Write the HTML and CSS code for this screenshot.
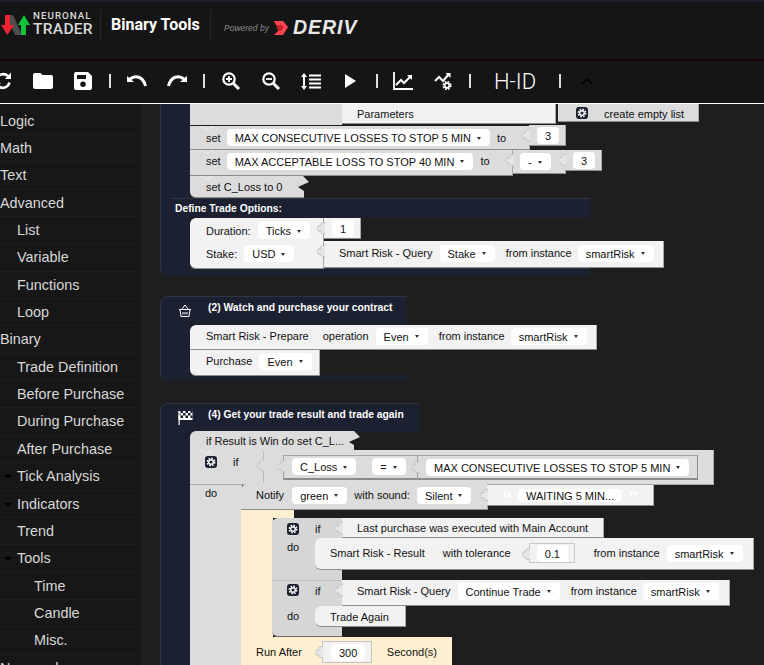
FILE: index.html
```html
<!DOCTYPE html>
<html lang="en">
<head>
  <meta charset="UTF-8">
  <meta name="viewport" content="width=device-width, initial-scale=1.0">
  <title>Binary Tools</title>
  <link rel="stylesheet" href="styles.css">
</head>
<body>
  <svg class="defs" width="0" height="0">
    <symbol id="gear" viewBox="0 0 12 12">
      <rect width="12" height="12" rx="3" fill="#1b2131"/>
      <circle cx="6" cy="6" r="3.7" fill="none" stroke="#fff" stroke-width="1.5" stroke-dasharray="1.6 1.3"/>
      <circle cx="6" cy="6" r="2.3" fill="none" stroke="#fff" stroke-width="1.4"/>
    </symbol>
    <symbol id="sock" viewBox="0 0 8 16">
      <path d="M8 1 V3 C4 2 3 4 4 6 C1 5 0 7 0 8.500 C0 10 1 12 4 11 C3 13 5 14 8 13.500 V16" fill="currentColor" stroke="#c4c4c4" stroke-width="1"/>
    </symbol>
  </svg>

  <header class="topbar">
    <div class="brand">
      <svg class="brand-mark" width="29" height="20" viewBox="0 0 29 20">
        <path d="M5 0 H12 L21 20 H14 Z" fill="#4d4d4d"/>
        <path d="M4 0 H9 V10 H13 L6.500 20 L0 10 H4 Z" fill="#ee2233"/>
        <path d="M20 20 V10 H17 L23 0 L29 10 H25 V20 Z" fill="#11c23c"/>
      </svg>
      <div class="brand-text">
        <span class="brand-small">NEURONAL</span>
        <span class="brand-big">TRADER</span>
      </div>
    </div>
    <div class="head-sep"></div>
    <div class="app-title">Binary Tools</div>
    <div class="head-sep"></div>
    <div class="powered">
      <span class="powered-by">Powered by</span>
      <svg width="16" height="14" viewBox="0 0 16 14"><path d="M1 0 H10 L15 6 L10 14 H1 L5 10 H8 L10 6 L8 4 H3 Z" fill="#ff444f"/><path d="M3 4 H8 L10 6 L8 10 H5 Z" fill="#c7222c"/></svg>
      <span class="deriv">DERIV</span>
    </div>
  </header>

  <nav class="toolbar">
    <span class="tool"><svg width="18" height="18" viewBox="0 0 18 18" fill="none" stroke="#fff" stroke-width="2.600"><path d="M2.500 7.500 A7 7 0 0 1 14 4"/><path d="M15.500 10.500 A7 7 0 0 1 4 14"/><path d="M17 0.500 V7 H11 Z" fill="#fff" stroke="none"/><path d="M1 17.500 V11 H7 Z" fill="#fff" stroke="none"/></svg></span>
    <span class="tool"><svg width="20" height="16" viewBox="0 0 20 16"><path d="M0 2 A2 2 0 0 1 2 0 H7.500 L9.500 2 H18 A2 2 0 0 1 20 4 V14 A2 2 0 0 1 18 16 H2 A2 2 0 0 1 0 14 Z" fill="#fff"/></svg></span>
    <span class="tool"><svg width="18" height="18" viewBox="0 0 18 18"><path fill-rule="evenodd" d="M2 0 H14 L18 4 V16 A2 2 0 0 1 16 18 H2 A2 2 0 0 1 0 16 V2 A2 2 0 0 1 2 0 Z M3 3 V7 H12 V3 Z M9 9.500 A2.700 2.700 0 1 0 9 15 A2.700 2.700 0 1 0 9 9.500 Z" fill="#fff"/></svg></span>
    <span class="tool-sep"></span>
    <span class="tool"><svg width="20" height="14" viewBox="0 0 20 14"><path d="M0 1 L7 7 H0 Z" fill="#fff" transform="translate(0 1)"/><path d="M3 5 C8 1 16 2 18.500 12" fill="none" stroke="#fff" stroke-width="3"/></svg></span>
    <span class="tool"><svg width="20" height="14" viewBox="0 0 20 14"><path d="M20 2 L13 8 H20 Z" fill="#fff"/><path d="M17 5 C12 1 4 2 1.500 12" fill="none" stroke="#fff" stroke-width="3"/></svg></span>
    <span class="tool-sep"></span>
    <span class="tool"><svg width="18" height="18" viewBox="0 0 18 18" fill="none" stroke="#fff"><circle cx="7" cy="7" r="5.700" stroke-width="2.200"/><path d="M11 11 L17 17" stroke-width="3"/><path d="M7 4 V10 M4 7 H10" stroke-width="1.800"/></svg></span>
    <span class="tool"><svg width="18" height="18" viewBox="0 0 18 18" fill="none" stroke="#fff"><circle cx="7" cy="7" r="5.700" stroke-width="2.200"/><path d="M11 11 L17 17" stroke-width="3"/><path d="M4 7 H10" stroke-width="1.800"/></svg></span>
    <span class="tool"><svg width="20" height="17" viewBox="0 0 20 17" fill="#fff"><path d="M3 0 L6 4 H4 V13 H6 L3 17 L0 13 H2 V4 H0 Z"/><rect x="8" y="1.500" width="12" height="2"/><rect x="8" y="5.500" width="12" height="2"/><rect x="8" y="9.500" width="12" height="2"/><rect x="8" y="13.500" width="12" height="2"/></svg></span>
    <span class="tool"><svg width="12" height="14" viewBox="0 0 12 14"><path d="M0 0 L11 7 L0 14 Z" fill="#fff"/></svg></span>
    <span class="tool-sep tool-sep-tight"></span>
    <span class="tool"><svg width="20" height="18" viewBox="0 0 20 18" fill="none" stroke="#fff"><path d="M1 0 V17 H20" stroke-width="1.800"/><path d="M3 13 L8 8 L11 11 L18 4" stroke-width="2"/><path d="M14 3 H19 V8 Z" fill="#fff" stroke="none"/></svg></span>
    <span class="tool"><svg width="19" height="19" viewBox="0 0 19 19" fill="none" stroke="#fff"><path d="M1 9 L5 5 L9 9 L15 2" stroke-width="2"/><path d="M11.500 1 H16.500 V6 Z" fill="#fff" stroke="none"/><circle cx="13" cy="13.500" r="3.800" stroke-width="1.600" stroke-dasharray="1.800 1.200"/><circle cx="13" cy="13.500" r="2.300" stroke-width="1.700"/></svg></span>
    <span class="tool-sep"></span>
    <span class="account">H-ID</span>
    <span class="tool-sep tool-sep-last"></span>
    <svg class="chevron" width="12" height="7" viewBox="0 0 12 7" fill="none" stroke="#000" stroke-width="1.500"><path d="M1 6 L6 1 L11 6"/></svg>
  </nav>

  <main class="main">
    <aside class="sidebar">
      <div class="cat">Logic</div>
      <div class="cat">Math</div>
      <div class="cat">Text</div>
      <div class="cat">Advanced</div>
      <div class="cat sub">List</div>
      <div class="cat sub">Variable</div>
      <div class="cat sub">Functions</div>
      <div class="cat sub">Loop</div>
      <div class="cat">Binary</div>
      <div class="cat sub">Trade Definition</div>
      <div class="cat sub">Before Purchase</div>
      <div class="cat sub">During Purchase</div>
      <div class="cat sub">After Purchase</div>
      <div class="cat sub open">Tick Analysis</div>
      <div class="cat sub open">Indicators</div>
      <div class="cat sub">Trend</div>
      <div class="cat sub open">Tools</div>
      <div class="cat subsub">Time</div>
      <div class="cat subsub">Candle</div>
      <div class="cat subsub">Misc.</div>
      <div class="cat">Neuronal</div>
    </aside>

    <section class="canvas">
      <!-- group frames -->
      <div class="navy stripe-a"></div>
      <div class="navy define-bar">Define Trade Options:</div>
      <div class="navy foot-a"></div>

      <div class="navy head-b">
        <svg class="head-icon" width="14" height="14" viewBox="0 0 14 14" fill="none" stroke="#fff" stroke-width="1"><path d="M1 5.500 H13 M2 5.500 L3 12.500 H11 L12 5.500 M4 5 L7 1 M10 5 L7 1 M5 8 V10.500 M7 8 V10.500 M9 8 V10.500"/></svg>
        <span class="head-text">(2) Watch and purchase your contract</span>
      </div>
      <div class="navy stripe-b"></div>
      <div class="navy foot-b"></div>

      <div class="navy head-c">
        <svg class="head-icon" width="15" height="15" viewBox="0 0 15 15"><rect x="0.500" y="1" width="14" height="9" fill="#fff"/><path d="M2.500 1 H5 V3 H2.500 Z M7.500 1 H10 V3 H7.500 Z M12.500 1 H14.500 V3 H12.500 Z M0.500 3 H2.500 V5.500 H0.500 Z M5 3 H7.500 V5.500 H5 Z M10 3 H12.500 V5.500 H10 Z M2.500 5.500 H5 V8 H2.500 Z M7.500 5.500 H10 V8 H7.500 Z M12.500 5.500 H14.500 V8 H12.500 Z" fill="#1b2131"/><rect x="0.500" y="1" width="1.200" height="14" fill="#fff"/></svg>
        <span class="head-text">(4) Get your trade result and trade again</span>
      </div>
      <div class="navy stripe-c"></div>

      <!-- first group -->
      <div class="block grey params-left"></div>
      <div class="block light params"><span>Parameters</span></div>
      <div class="block grey create"><svg class="gear" width="12" height="12"><use href="#gear"/></svg><span>create empty list</span></div>

      <div class="block grey notch set-one"><span>set</span><span class="field">MAX CONSECUTIVE LOSSES TO STOP 5 MIN</span><span>to</span></div>
      <div class="block grey num-one"><svg class="sock" width="8" height="16"><use href="#sock"/></svg><span class="field plain">3</span></div>
      <div class="block grey notch set-two"><span>set</span><span class="field">MAX ACCEPTABLE LOSS TO STOP 40 MIN</span><span>to</span></div>
      <div class="block grey minus"><svg class="sock" width="8" height="16"><use href="#sock"/></svg><span class="field">-</span></div>
      <div class="block grey num-two"><svg class="sock" width="8" height="16"><use href="#sock"/></svg><span class="field plain">3</span></div>
      <div class="block grey notch c-loss"><span>set C_Loss to 0</span></div>

      <div class="block light options">
        <div class="row"><span>Duration:</span><span class="field">Ticks</span></div>
        <div class="row row-stake"><span>Stake:</span><span class="field">USD</span></div>
      </div>
      <div class="block light num-duration"><svg class="sock" width="8" height="16"><use href="#sock"/></svg><span class="field plain">1</span></div>
      <div class="block light query-stake"><svg class="sock" width="8" height="16"><use href="#sock"/></svg><span>Smart Risk - Query</span><span class="field">Stake</span><span class="from">from instance</span><span class="field">smartRisk</span></div>

      <!-- second group -->
      <div class="block light prepare"><span>Smart Risk - Prepare</span><span class="from-wide">operation</span><span class="field">Even</span><span class="from">from instance</span><span class="field">smartRisk</span></div>
      <div class="block light notch purchase"><span>Purchase</span><span class="field">Even</span></div>

      <!-- third group -->
      <div class="block grey collapsed"><span>if Result is Win do set C_L...</span></div>
      <div class="block grey notch if-main">
        <svg class="gear" width="12" height="12"><use href="#gear"/></svg><span class="if-word">if</span>
      </div>
      <div class="block grey if-column"><span class="do-word">do</span></div>
      <div class="block grey if-value"><svg class="sock" width="8" height="16"><use href="#sock"/></svg></div>
      <div class="block grey compare">
        <svg class="sock" width="8" height="16"><use href="#sock"/></svg>
        <span class="field">C_Loss</span><span class="field eq">=</span>
        <div class="compare-right"><svg class="sock" width="8" height="16"><use href="#sock"/></svg><span class="field">MAX CONSECUTIVE LOSSES TO STOP 5 MIN</span></div>
      </div>

      <div class="block grey notify"><span>Notify</span><span class="field">green</span><span>with sound:</span><span class="field">Silent</span></div>
      <div class="block light waiting"><svg class="sock" width="8" height="16"><use href="#sock"/></svg><span class="quote">“</span><span class="field plain">WAITING 5 MIN...</span><span class="quote">”</span></div>

      <div class="cream cream-side"></div>
      <div class="cream cream-top"></div>
      <div class="cream run-after"><span>Run After</span><span class="spacer-num"></span><span>Second(s)</span></div>
      <div class="block light num-wait"><svg class="sock" width="8" height="16"><use href="#sock"/></svg><span class="field plain">300</span></div>

      <div class="block grey inner-if">
        <svg class="gear inner-gear-a" width="12" height="12"><use href="#gear"/></svg>
        <span class="inner-word word-if-a">if</span>
        <span class="inner-word word-do-a">do</span>
        <svg class="gear inner-gear-b" width="12" height="12"><use href="#gear"/></svg>
        <span class="inner-word word-if-b">if</span>
        <span class="inner-word word-do-b">do</span>
        <div class="inner-split"></div>
      </div>
      <div class="block light last-purchase"><svg class="sock" width="8" height="16"><use href="#sock"/></svg><span>Last purchase was executed with Main Account</span></div>
      <div class="block light result"><span>Smart Risk - Result</span><span class="tolerance">with tolerance</span><span class="num-tol"><svg class="sock" width="8" height="16"><use href="#sock"/></svg><span class="field plain">0.1</span></span><span class="from-tol">from instance</span><span class="field">smartRisk</span></div>
      <div class="block light query-continue"><svg class="sock" width="8" height="16"><use href="#sock"/></svg><span>Smart Risk - Query</span><span class="field">Continue Trade</span><span class="from">from instance</span><span class="field">smartRisk</span></div>
      <div class="block light trade-again"><span>Trade Again</span></div>
    </section>
  </main>
</body>
</html>
```

FILE: styles.css
```css
* {
  margin: 0;
  padding: 0;
  box-sizing: border-box;
}
body {
  width: 764px;
  height: 665px;
  overflow: hidden;
  background: #1e1e1e;
  font-family: "Liberation Sans", Arial, sans-serif;
  color: #fff;
}
.defs {
  position: absolute;
}

/* header */
.topbar {
  height: 61px;
  display: flex;
  align-items: center;
  background: #151515;
  border-top: 2px solid #1c2029;
  border-bottom: 2px solid #1c0404;
  padding: 0 0 12px 1px;
}
.brand {
  display: flex;
  align-items: center;
  gap: 3px;
  width: 99px;
}
.brand-mark {
  margin-top: 1px;
}
.brand-text {
  display: flex;
  flex-direction: column;
  gap: 1px;
  font-family: Roboto, sans-serif;
  color: #d8d8d8;
  line-height: 1;
}
.brand-small {
  font-size: 9.800px;
  font-weight: 500;
  letter-spacing: 1px;
}
.brand-big {
  font-size: 15.500px;
  font-weight: 500;
  letter-spacing: 0.300px;
}
.head-sep {
  width: 1px;
  height: 32px;
  background: #1c2530;
}
.app-title {
  width: 109px;
  padding-left: 10px;
  font-family: Roboto, sans-serif;
  font-size: 16px;
  font-weight: 700;
}
.powered {
  display: flex;
  align-items: center;
  gap: 4px;
  padding: 6px 0 0 13px;
}
.powered-by {
  font-size: 8.500px;
  font-style: italic;
  color: #8a8a8a;
}
.deriv {
  font-size: 19.500px;
  font-weight: 700;
  font-style: italic;
  letter-spacing: 1px;
  color: #e8e8e8;
}

/* toolbar */
.toolbar {
  height: 43px;
  display: flex;
  align-items: center;
  background: #151515;
  border-bottom: 1px solid #fff;
  margin-left: -17px;
  padding-bottom: 2px;
}
.tool {
  width: 40px;
  display: flex;
  justify-content: center;
}
.tool-sep {
  width: 14px;
  height: 14px;
  background: linear-gradient(#ddd, #ddd) center / 2px 100% no-repeat;
}
.tool-sep-tight {
  width: 12px;
}
.account {
  width: 76px;
  text-align: center;
  font-family: Roboto, sans-serif;
  font-size: 22px;
  font-weight: 300;
}
.chevron {
  margin-left: 14px;
}

/* layout */
.main {
  height: 561px;
  display: flex;
  overflow: hidden;
}
.sidebar {
  width: 141px;
  flex: none;
  padding-top: 3.500px;
  background: #171717;
}
.cat {
  position: relative;
  height: 27.370px;
  line-height: 27px;
  font-size: 14.400px;
  color: #d8d8d8;
  border-bottom: 1px solid #1f1f1f;
}
.sub {
  padding-left: 17px;
}
.subsub {
  padding-left: 34px;
}
.open::before {
  content: "";
  position: absolute;
  left: 4px;
  top: 12px;
  border: 4px solid transparent;
  border-top: 4px solid #000;
}
.canvas {
  position: relative;
  flex: 1;
  overflow: hidden;
  background: #1e1e1e;
}

/* group frames */
.navy {
  position: absolute;
  background: #1b2131;
}
.stripe-a {
  left: 19px;
  top: 0;
  width: 30px;
  height: 172px;
  border-left: 1px solid #2d3444;
  border-bottom-left-radius: 8px;
}
.define-bar {
  left: 30px;
  top: 94px;
  width: 419px;
  height: 20px;
  padding: 4px 0 0 4px;
  font-size: 10.300px;
  font-weight: 700;
  white-space: nowrap;
  border-top: 1px solid #2d3444;
}
.foot-a {
  left: 49px;
  top: 164px;
  width: 400px;
  height: 8px;
  border-top: 1px solid #2d3444;
}
.head-b,
.head-c {
  display: flex;
  align-items: center;
  left: 19px;
  height: 29px;
  padding: 0 0 7px 17px;
  border-top: 1px solid #2d3444;
  border-left: 1px solid #2d3444;
  border-top-left-radius: 8px;
}
.head-b {
  top: 192px;
  width: 247px;
}
.head-c {
  top: 299px;
  width: 259px;
}
.head-icon {
  flex: none;
  transform: translateY(3px);
}
.head-text {
  margin-left: 16px;
  font-size: 10.300px;
  font-weight: 700;
  white-space: nowrap;
}
.head-c .head-text {
  margin-left: 15px;
}
.stripe-b {
  left: 19px;
  top: 221px;
  width: 30px;
  height: 56px;
  border-left: 1px solid #2d3444;
  border-bottom-left-radius: 8px;
}
.foot-b {
  left: 49px;
  top: 271px;
  width: 217px;
  height: 6px;
}
.stripe-c {
  left: 19px;
  top: 328px;
  width: 30px;
  height: 233px;
  border-left: 1px solid #2d3444;
}

/* blocks */
.block {
  position: absolute;
  display: flex;
  align-items: center;
  gap: 7px;
  font-size: 11px;
  color: #111;
  white-space: nowrap;
  border-bottom: 1px solid #8c8c8c;
  border-right: 1px solid #a8a8a8;
}
.grey {
  background: #dcdcdc;
  color: #111;
}
.light {
  background: #f2f2f2;
}
.cream {
  position: absolute;
  background: #fdefcf;
}
.notch::before {
  content: "";
  position: absolute;
  left: 10px;
  top: 0;
  width: 14px;
  height: 4px;
  background: #f0f0f0;
  clip-path: polygon(0 0, 2px 0, 7px 3px, 12px 0, 14px 0, 7px 4px);
}
.field {
  display: flex;
  align-items: center;
  gap: 6px;
  height: 17px;
  padding: 1px 9px 0 8px;
  background: #fff;
  border-radius: 4px;
  color: #111;
}
.field::after {
  content: "";
  border: 2.500px solid transparent;
  border-top: 3px solid #333;
  border-bottom: 0;
}
.field.plain {
  padding-right: 8px;
}
.field.plain::after {
  display: none;
}
.sock {
  position: absolute;
  left: -7px;
  top: 2px;
  color: #e6e6e6;
}
.from {
  margin: 0 -1px 0 4px;
}
.gear {
  flex: none;
}

/* first group */
.params-left {
  left: 49px;
  top: 0;
  width: 152px;
  height: 21px;
  border: 0;
}
.params {
  left: 201px;
  top: 0;
  width: 214px;
  height: 20px;
  padding: 1px 0 0 15px;
}
.create {
  left: 417px;
  top: 0;
  width: 141px;
  height: 18px;
  padding-left: 18px;
  gap: 16px;
}
.create span {
  margin-top: 2px;
}
.set-one {
  left: 49px;
  top: 22px;
  width: 340px;
  height: 24px;
  padding-left: 16px;
  gap: 6px;
}
.set-one .field,
.set-two .field {
  margin-right: 1px;
}
.num-one {
  left: 388px;
  top: 21px;
  width: 37px;
  height: 21px;
  padding-left: 8px;
}
.set-two {
  left: 49px;
  top: 46px;
  width: 323px;
  height: 26px;
  padding: 0 0 3px 16px;
  gap: 6px;
}
.minus {
  left: 372px;
  top: 46px;
  width: 53px;
  height: 24px;
  padding-left: 7px;
}
.num-two {
  left: 424px;
  top: 46px;
  width: 37px;
  height: 21px;
  padding-left: 8px;
}
.c-loss {
  left: 49px;
  top: 72px;
  width: 119px;
  height: 22px;
  padding-left: 16px;
  border-bottom-left-radius: 6px;
  clip-path: polygon(0 0, 113px 0, 119px 6px, 108px 11px, 114px 15px, 114px 100%, 0 100%);
}
.options {
  left: 49px;
  top: 114px;
  width: 134px;
  height: 51px;
  flex-direction: column;
  align-items: flex-start;
  padding: 4px 0 0 16px;
  gap: 6px;
  border-bottom-left-radius: 6px;
  border-top-left-radius: 6px;
}
.row {
  display: flex;
  align-items: center;
  gap: 7px;
}
.num-duration {
  left: 183px;
  top: 114px;
  width: 37px;
  height: 21px;
  padding-left: 8px;
}
.query-stake {
  left: 183px;
  top: 137px;
  width: 340px;
  height: 27px;
  padding: 0 0 2px 15px;
}

/* second group */
.prepare {
  left: 49px;
  top: 221px;
  width: 407px;
  height: 25px;
  padding: 0 0 2px 16px;
  border-top-left-radius: 6px;
}
.from-wide {
  margin-left: 7px;
}
.purchase {
  left: 49px;
  top: 246px;
  width: 130px;
  height: 26px;
  padding: 0 0 3px 16px;
  border-bottom-left-radius: 6px;
}

/* third group */
.collapsed {
  left: 49px;
  top: 327px;
  width: 176px;
  height: 20px;
  padding-left: 16px;
  border-top-left-radius: 6px;
  clip-path: polygon(0 0, 164px 0, 170px 6px, 159px 11px, 164px 14px, 164px 100%, 0 100%);
}
.if-main {
  left: 49px;
  top: 346px;
  width: 524px;
  height: 35px;
  padding: 0 0 10px 15px;
  gap: 16px;
  border-color: #a8a8a8;
}
.if-column {
  left: 49px;
  top: 381px;
  width: 52px;
  height: 180px;
  align-items: flex-start;
  padding: 2px 0 0 15px;
  border: 0;
}
.if-value {
  left: 122px;
  top: 347px;
  width: 1px;
  height: 32px;
  background: #b8b8b8;
  border: 0;
}
.if-value .sock {
  color: #dcdcdc;
  top: 6px;
}
.compare {
  left: 142px;
  top: 351px;
  width: 415px;
  height: 25px;
  padding: 0 0 1px 8px;
  border: 1px solid #a4a4a4;
  border-right-color: #8c8c8c;
  border-bottom-width: 2px;
  border-bottom-color: #8c8c8c;
}
.compare > .sock {
  color: #dcdcdc;
}
.eq {
  margin-left: 9px;
}
.compare-right {
  position: absolute;
  left: 133px;
  top: -1px;
  bottom: -2px;
  width: 281px;
  display: flex;
  align-items: center;
  padding: 0 0 1px 8px;
  border-left: 1px solid #a4a4a4;
}
.compare-right .sock {
  color: #dcdcdc;
  top: 4px;
}
.notify {
  left: 100px;
  top: 380px;
  width: 247px;
  height: 26px;
  padding: 0 0 3px 15px;
  border-top-left-radius: 6px;
}
.notify .field:nth-child(2) {
  margin-left: 1px;
}
.waiting {
  left: 346px;
  top: 381px;
  width: 167px;
  height: 21px;
  padding-left: 15px;
  gap: 6px;
}
.quote {
  font-family: "Liberation Serif", serif;
  font-size: 20px;
  font-weight: 700;
  line-height: 1;
  height: 14px;
  color: #fff;
}
.waiting .field {
  height: 13px;
}
.cream-side {
  left: 100px;
  top: 406px;
  width: 32px;
  height: 130px;
}
.cream-top {
  left: 132px;
  top: 406px;
  width: 21px;
  height: 8px;
}
.run-after {
  left: 100px;
  top: 533px;
  width: 211px;
  height: 28px;
  display: flex;
  align-items: center;
  gap: 7px;
  padding: 1px 0 0 15px;
  font-size: 11px;
  color: #111;
}
.spacer-num {
  width: 71px;
}
.num-wait {
  left: 181px;
  top: 537px;
  width: 50px;
  height: 22px;
  padding-left: 8px;
  border: 1px solid #c4c4c4;
}
.num-wait .sock {
  left: -8px;
}
.inner-if {
  left: 131px;
  top: 414px;
  width: 70px;
  height: 119px;
  background: #d6d6d6;
  border: 0;
  border-bottom: 1px solid #6a6a6a;
  border-radius: 6px 0 0 6px;
}
.inner-if .gear,
.inner-word {
  position: absolute;
}
.inner-gear-a {
  left: 15px;
  top: 5px;
}
.inner-gear-b {
  left: 15px;
  top: 66px;
}
.word-if-a {
  left: 43px;
  top: 5px;
}
.word-do-a {
  left: 15px;
  top: 23px;
}
.word-if-b {
  left: 43px;
  top: 67px;
}
.word-do-b {
  left: 15px;
  top: 92px;
}
.inner-split {
  position: absolute;
  left: 0;
  top: 62px;
  width: 100%;
  height: 1px;
  background: #bdbdbd;
}
.last-purchase {
  left: 201px;
  top: 414px;
  width: 262px;
  height: 20px;
  padding-left: 15px;
}
.result {
  left: 174px;
  top: 434px;
  width: 439px;
  height: 32px;
  padding: 0 0 1px 15px;
  border-radius: 6px 0 0 6px;
}
.tolerance {
  margin-left: 11px;
}
.num-tol {
  position: relative;
  display: flex;
  align-items: center;
  width: 46px;
  height: 20px;
  margin-left: 11px;
  padding-left: 7px;
  background: #f2f2f2;
  border: 1px solid #c8c8c8;
}
.num-tol .sock {
  left: -8px;
}
.from-tol {
  margin-left: 12px;
}
.query-continue {
  left: 201px;
  top: 476px;
  width: 388px;
  height: 26px;
  padding: 0 0 3px 15px;
}
.trade-again {
  left: 174px;
  top: 502px;
  width: 91px;
  height: 21px;
  padding: 1px 0 0 15px;
  border-radius: 6px 0 0 6px;
}
```
